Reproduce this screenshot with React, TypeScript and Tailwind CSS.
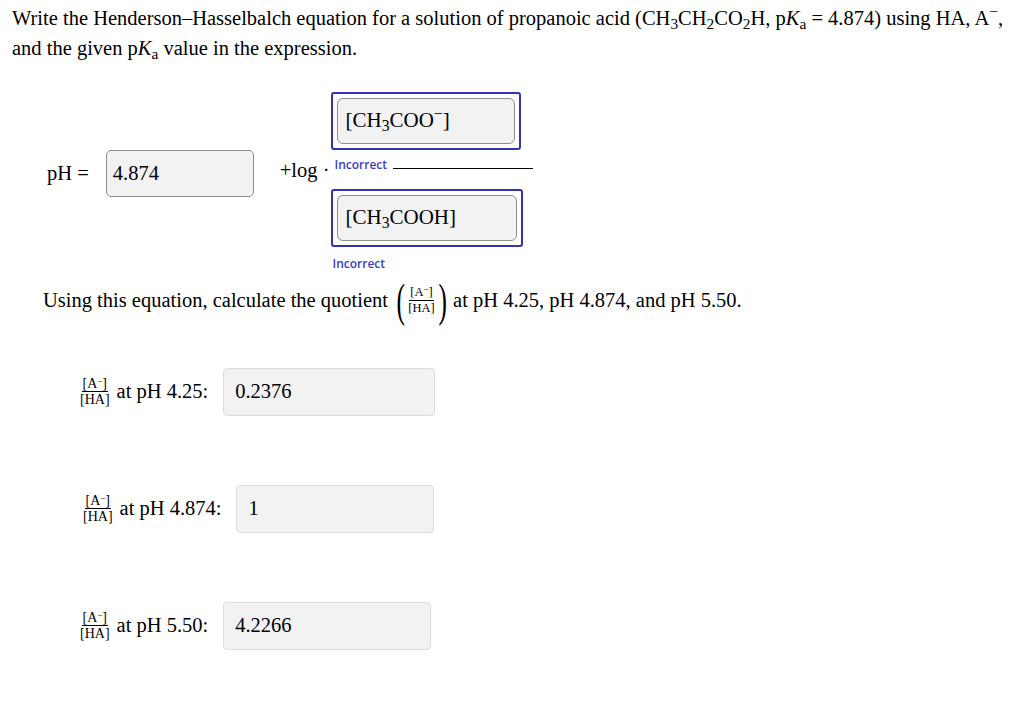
const serif = { fontFamily: '"Liberation Serif", "Times New Roman", serif' };

function SmallFrac({ size = "text-[14px]" }: { size?: string }) {
  return (
    <span className={`inline-flex flex-col items-center leading-[15px] ${size} align-middle`}>
      <span className="px-[1px] border-b border-black">
        [A<sup className="text-[9px]">−</sup>]
      </span>
      <span>[HA]</span>
    </span>
  );
}

function Incorrect() {
  return (
    <span
      className="text-[12px] font-semibold text-[#3b3bbd]"
      style={{ fontFamily: '"Open Sans", "Noto Sans", sans-serif' }}
    >
      Incorrect
    </span>
  );
}

function AnswerBox({ children, width }: { children: React.ReactNode; width: string }) {
  return (
    <div className={`rounded-[3px] border-2 border-[#3434a6] p-[4px] ${width}`}>
      <div className="h-[46px] rounded-[6px] border-[1.5px] border-[#8e8e8e] bg-[#f2f2f2] flex items-center px-[7px] text-[21px]">
        <span>{children}</span>
      </div>
    </div>
  );
}

function QuotientRow({ ph, value, boxW }: { ph: string; value: string; boxW: string }) {
  return (
    <div className="flex items-center">
      <SmallFrac />
      <span className="ml-[7px] mr-[15px]">at pH {ph}:</span>
      <div className={`h-[48px] ${boxW} rounded-[4px] border border-[#dcdcdc] bg-[#f2f2f2] flex items-center px-[11px]`}>
        {value}
      </div>
    </div>
  );
}

export default function App() {
  return (
    <div className="w-[1024px] h-[706px] bg-white text-black text-[20.5px] overflow-hidden" style={serif}>
      <p className="px-[12px] pt-[3px] leading-[30px] whitespace-nowrap">
        Write the Henderson–Hasselbalch equation for a solution of propanoic acid (CH
        <sub>3</sub>CH<sub>2</sub>CO<sub>2</sub>H, p<i>K</i>
        <sub>a</sub> = 4.874) using HA, A<sup>−</sup>,
        <br />
        and the given p<i>K</i>
        <sub>a</sub> value in the expression.
      </p>

      <div className="flex items-start mt-[29px] ml-[47px]">
        <div className="flex items-center mt-[58px]">
          <span>pH =</span>
          <div className="ml-[17px] w-[148px] h-[47px] rounded-[5px] border-[1.5px] border-[#8e8e8e] bg-[#f2f2f2] flex items-center px-[6px]">
            4.874
          </div>
          <span className="ml-[26px] -mt-[6px]">+log ·</span>
        </div>
        <div className="ml-[2px] flex flex-col w-[202px]">
          <AnswerBox width="w-[190px]">
            [CH<sub>3</sub>COO<sup>−</sup>]
          </AnswerBox>
          <div className="h-[39px] flex items-center pl-[3px] gap-[6px]">
            <span className="-mt-[14px]">
              <Incorrect />
            </span>
            <div className="flex-1 border-t-[1.5px] border-black -mt-[2px]" />
          </div>
          <AnswerBox width="w-[192px]">
            [CH<sub>3</sub>COOH]
          </AnswerBox>
          <div className="-mt-[1px] pl-[1px]">
            <Incorrect />
          </div>
        </div>
      </div>

      <div className="flex items-center ml-[43px] mt-[1px]">
        <span>Using this equation, calculate the quotient</span>
        <span className="ml-[5px] text-[46px] leading-none font-light scale-x-[0.55]">(</span>
        <SmallFrac size="text-[12.5px]" />
        <span className="text-[46px] leading-none font-light scale-x-[0.55]">)</span>
        <span className="ml-[3px]">at pH 4.25, pH 4.874, and pH 5.50.</span>
      </div>

      <div className="ml-[80px] mt-[44px] flex flex-col gap-[69px]">
        <QuotientRow ph="4.25" value="0.2376" boxW="w-[212px]" />
        <div className="ml-[3px]">
          <QuotientRow ph="4.874" value="1" boxW="w-[198px]" />
        </div>
        <QuotientRow ph="5.50" value="4.2266" boxW="w-[208px]" />
      </div>
    </div>
  );
}
